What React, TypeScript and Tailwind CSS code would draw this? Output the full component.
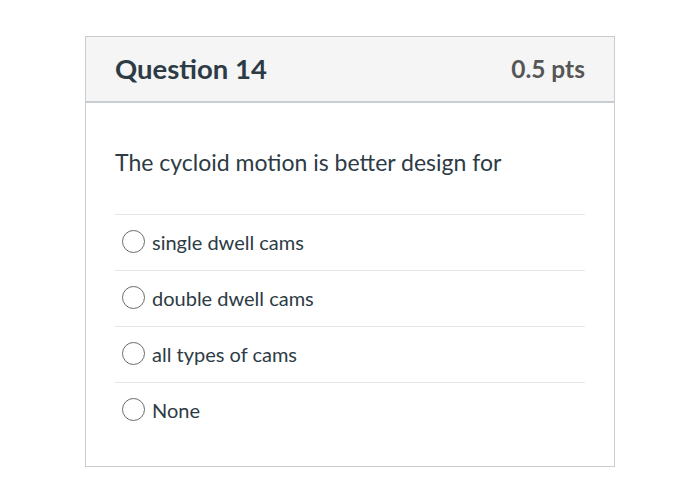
export default function App() {
  const options = ['single dwell cams', 'double dwell cams', 'all types of cams', 'None'];

  return (
    <div className="h-[502px] w-[700px] bg-white pl-[85px] pt-[36px] font-['Lato',sans-serif] text-[#2d3b45]">
      <div className="h-[431px] w-[530px] border border-[#c7cdd1]">
        {/* Header */}
        <div className="flex h-[66px] items-center justify-between border-b-2 border-[#c7cdd1] bg-[#f5f5f5] px-[29px]">
          <h2 className="text-[27.5px] font-bold">Question 14</h2>
          <span className="text-[24.5px] font-bold text-[#565656]">0.5 pts</span>
        </div>

        {/* Body */}
        <div className="px-[29px] pt-[44px]">
          <p className="text-[23px] leading-[30px]">The cycloid motion is better design for</p>
          <div className="mt-[37px]">
            {options.map((opt) => (
              <label
                key={opt}
                className="flex h-[56px] items-center gap-[7px] border-t border-[#e5e8ea] pb-[2px] pl-[7px]"
              >
                <span className="h-[23px] w-[23px] shrink-0 rounded-full border-[1.5px] border-[#6b6b6b] bg-white" />
                <span className="text-[20px]">{opt}</span>
              </label>
            ))}
          </div>
        </div>
      </div>
    </div>
  );
}
